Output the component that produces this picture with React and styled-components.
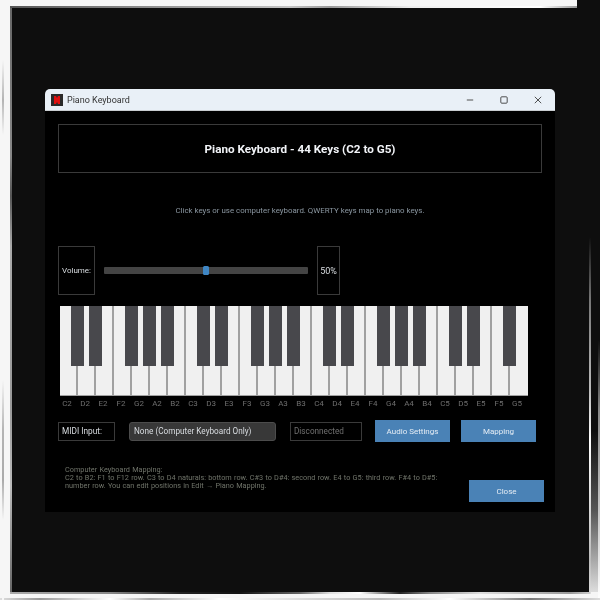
import React from "react"
import styled, { createGlobalStyle } from "styled-components"

const GlobalStyle = createGlobalStyle`
  html, body {
    margin: 0;
    padding: 0;
    background: #f6f6f6;
  }
  * {
    box-sizing: border-box;
  }
`

const whiteKeys = [
  { name: "C2", sharp: true },
  { name: "D2", sharp: true },
  { name: "E2" },
  { name: "F2", sharp: true },
  { name: "G2", sharp: true },
  { name: "A2", sharp: true },
  { name: "B2" },
  { name: "C3", sharp: true },
  { name: "D3", sharp: true },
  { name: "E3" },
  { name: "F3", sharp: true },
  { name: "G3", sharp: true },
  { name: "A3", sharp: true },
  { name: "B3" },
  { name: "C4", sharp: true },
  { name: "D4", sharp: true },
  { name: "E4" },
  { name: "F4", sharp: true },
  { name: "G4", sharp: true },
  { name: "A4", sharp: true },
  { name: "B4" },
  { name: "C5", sharp: true },
  { name: "D5", sharp: true },
  { name: "E5" },
  { name: "F5", sharp: true },
  { name: "G5" },
]

export default function App() {
  return (
    <Page>
      <GlobalStyle />
      <Desktop>
        <Window>
          <TitleBar>
            <AppIcon viewBox="0 0 12 12">
              <rect width="12" height="12" fill="#2a2a2a" />
              <path d="M3 2h2l1 2 1-2h2v8H7L6 8l-1 2H3z" fill="#e01010" />
            </AppIcon>
            <WindowTitle>Piano Keyboard</WindowTitle>
            <Controls>
              <ControlIcon viewBox="0 0 10 10">
                <path d="M1 5h8" />
              </ControlIcon>
              <ControlIcon viewBox="0 0 10 10">
                <rect x="1" y="1" width="8" height="8" rx="1.2" />
              </ControlIcon>
              <ControlIcon viewBox="0 0 10 10">
                <path d="M1 1l8 8M9 1l-8 8" />
              </ControlIcon>
            </Controls>
          </TitleBar>

          <Content>
            <Banner>Piano Keyboard - 44 Keys (C2 to G5)</Banner>
            <Hint>Click keys or use computer keyboard. QWERTY keys map to piano keys.</Hint>

            <VolumeRow>
              <VolumeBox $width={37}>Volume:</VolumeBox>
              <Slider>
                <Thumb />
              </Slider>
              <VolumeBox $width={23} $size={9}>50%</VolumeBox>
            </VolumeRow>

            <Keyboard>
              {whiteKeys.map((key) => (
                <WhiteKey key={key.name}>{key.sharp && <BlackKey />}</WhiteKey>
              ))}
            </Keyboard>
            <Labels>
              {whiteKeys.map((key) => (
                <Label key={key.name}>{key.name}</Label>
              ))}
            </Labels>

            <MidiRow>
              <MidiLabel>MIDI Input:</MidiLabel>
              <MidiSelect>None (Computer Keyboard Only)</MidiSelect>
              <Status>Disconnected</Status>
              <Button>Audio Settings</Button>
              <Button>Mapping</Button>
            </MidiRow>

            <Footer>
              <MappingText>
                Computer Keyboard Mapping:
                <br />
                C2 to B2: F1 to F12 row. C3 to D4 naturals: bottom row. C#3 to D#4: second row. E4 to G5: third row. F#4 to D#5:
                <br />
                number row. You can edit positions in Edit → Piano Mapping.
              </MappingText>
              <CloseButton>Close</CloseButton>
            </Footer>
          </Content>
        </Window>
      </Desktop>
    </Page>
  )
}

const Page = styled.div`
  width: 600px;
  height: 600px;
  padding: 8px 11px 8px 12px;
  overflow: hidden;
  filter: blur(0.3px);
  font-family: Roboto, "Noto Sans", "Liberation Sans", sans-serif;
  background-color: #f6f6f6;
  /* the scratchy white edge round the shot */
  background-repeat: no-repeat;
  background-image:
    linear-gradient(90deg, #555 0, #777 80px, #c4c4c4 280px, #999 320px, #eee 400px, #fff 530px, #999 567px),
    linear-gradient(180deg, #666 0, #888 150px, #555 190px, #aaa 240px, #999 400px, #bbb 480px, #666 586px),
    linear-gradient(180deg, #f6f6f6 60px, #b4b4b4 100px, #f6f6f6 135px, #f6f6f6 380px, #b4b4b4 430px, #aaa 480px, #f6f6f6 520px),
    linear-gradient(90deg, #aaa 0, #888 100px, #222 170px, #111 230px, #666 290px, #ddd 320px, #fff 350px, #222 390px, #888 420px, #ddd 470px, #999 560px, #ccc 580px),
    linear-gradient(90deg, #ddd 0, #999 40px, #fff 110px, #aaa 150px, #fff 220px, #bbb 380px, #fff 450px, #777 530px, #ddd 600px),
    linear-gradient(180deg, #0e0e0e 237px, #777 300px, #bbb 390px, #fff 440px, #bbb 560px, #ddd 594px),
    linear-gradient(180deg, #0e0e0e 340px, #888 410px, #ccc 520px, #fff 600px),
    linear-gradient(180deg, #0e0e0e 430px, #555 510px, #ddd 592px),
    linear-gradient(#0e0e0e, #0e0e0e);
  background-size:
    567px 2px,
    2px 586px,
    2px 600px,
    580px 2px,
    600px 2px,
    2px 594px,
    2px 600px,
    7px 592px,
    23px 8px;
  background-position:
    10px 6px,
    10px 6px,
    2px 0,
    10px 592px,
    0 598px,
    589px 0,
    598px 0,
    591px 0,
    577px 0;
`

const Desktop = styled.div`
  width: 100%;
  height: 100%;
  display: flex;
  flex-direction: column;
  padding: 81px 34px 0 33px;
  background: #0e0e0e;
`

const Window = styled.section`
  width: 510px;
  height: 423px;
  display: flex;
  flex-direction: column;
  background: #000;
  border-radius: 5px 5px 0 0;
  overflow: hidden;
`

const TitleBar = styled.header`
  height: 22px;
  flex: none;
  display: flex;
  align-items: center;
  padding-left: 6px;
  background: #e9f0f7;
  border-bottom: 1px solid #c8ccd0;
`

const AppIcon = styled.svg`
  width: 12px;
  height: 12px;
`

const WindowTitle = styled.span`
  margin-left: 4px;
  font-size: 9px;
  color: #333;
`

const Controls = styled.div`
  margin-left: auto;
  display: flex;
  align-items: center;
  gap: 26px;
  padding-right: 13px;
`

const ControlIcon = styled.svg`
  width: 8px;
  height: 8px;
  fill: none;
  stroke: #3a3a3a;
  stroke-width: 1.1;
`

const Content = styled.div`
  flex: 1;
  display: flex;
  flex-direction: column;
  padding: 13px 13px 10px;
`

const Banner = styled.div`
  height: 49px;
  flex: none;
  display: flex;
  align-items: center;
  justify-content: center;
  border: 1px solid #3a3a3a;
  font-size: 11.7px;
  font-weight: 700;
  color: #f2f4f8;
`

const Hint = styled.p`
  margin: 32px 0 29px;
  height: 12px;
  line-height: 12px;
  text-align: center;
  font-size: 7.9px;
  color: #8a96a0;
`

const VolumeRow = styled.div`
  height: 49px;
  flex: none;
  display: flex;
  align-items: center;
  gap: 9px;
`

const VolumeBox = styled.div`
  width: ${(props) => props.$width}px;
  height: 100%;
  flex: none;
  display: flex;
  align-items: center;
  justify-content: center;
  border: 1px solid #3a3a3a;
  font-size: ${(props) => props.$size || 8}px;
  color: #d8dce0;
`

const Slider = styled.div`
  position: relative;
  width: 204px;
  height: 7px;
  background: #444;
  border-radius: 1px;
`

const Thumb = styled.span`
  position: absolute;
  top: -1px;
  left: 99px;
  width: 6px;
  height: 9px;
  border-radius: 1.5px;
  background: #3f86c4;
`

const Keyboard = styled.div`
  margin: 11px 0 0 2px;
  padding-bottom: 1px;
  height: 90px;
  flex: none;
  display: grid;
  grid-template-columns: repeat(26, 18px);
  width: 468px;
  background: #a0a0a0;
`

const WhiteKey = styled.div`
  position: relative;
  margin-right: 2px;
  background: #f0f0f0;
  &:last-child {
    margin-right: 0;
  }
`

const BlackKey = styled.span`
  position: absolute;
  z-index: 1;
  top: 0;
  right: -8px;
  width: 13px;
  height: 60px;
  background: #48484c;
`

const Labels = styled.div`
  margin-top: 2px;
  height: 12px;
  flex: none;
  display: grid;
  grid-template-columns: repeat(26, 18px);
`

const Label = styled.span`
  text-align: center;
  line-height: 12px;
  font-size: 8px;
  color: #6e6e6e;
`

const MidiRow = styled.div`
  margin-top: 10px;
  height: 22px;
  flex: none;
  display: flex;
  align-items: center;
`

const MidiLabel = styled.div`
  width: 57px;
  height: 19px;
  padding-left: 3px;
  display: flex;
  align-items: center;
  border: 1px solid #3a3a3a;
  font-size: 8.3px;
  color: #d8dce0;
`

const MidiSelect = styled.div`
  margin-left: 14px;
  width: 147px;
  height: 19px;
  padding-left: 4px;
  display: flex;
  align-items: center;
  border: 1px solid #4c4c4c;
  border-radius: 3px;
  background: #383838;
  font-size: 8.2px;
  color: #d8dce0;
`

const Status = styled.div`
  margin-left: 14px;
  width: 72px;
  height: 19px;
  padding-left: 3px;
  display: flex;
  align-items: center;
  border: 1px solid #3a3a3a;
  font-size: 8.2px;
  color: #707070;
`

const Button = styled.button`
  margin-left: 13px;
  width: 75px;
  height: 22px;
  padding: 0;
  border: none;
  background: #4a82b6;
  font-family: inherit;
  font-size: 8px;
  color: #e4ecf4;
  & + & {
    margin-left: 11px;
  }
`

const Footer = styled.div`
  flex: 1;
  display: flex;
  align-items: flex-end;
  justify-content: space-between;
`

const MappingText = styled.p`
  margin: 0 0 12px 7px;
  font-size: 7.3px;
  line-height: 8px;
  word-spacing: 0.45px;
  color: #70746a;
`

const CloseButton = styled(Button)`
  margin: 0 -2px 0 0;
  flex: none;
`
